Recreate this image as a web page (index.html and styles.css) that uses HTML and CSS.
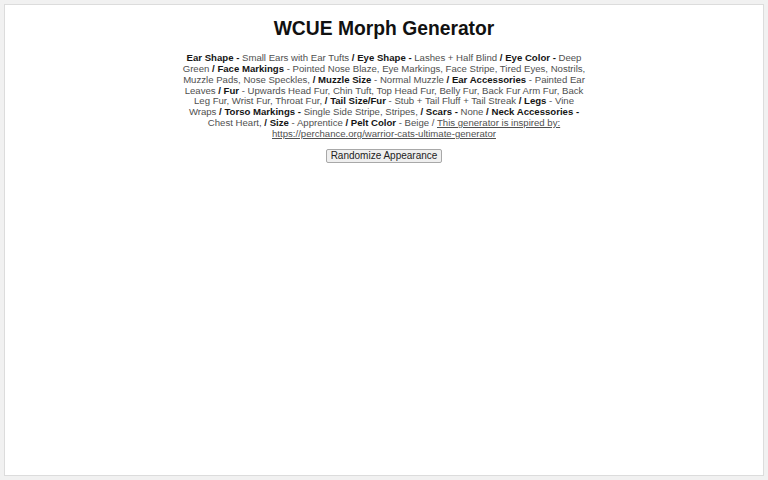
FILE: index.html
```html
<!DOCTYPE html>
<html lang="en">
<head>
<meta charset="utf-8">
<title>WCUE Morph Generator</title>
<link rel="stylesheet" href="styles.css">
</head>
<body>
<main class="page">
  <h1 class="title">WCUE Morph Generator</h1>
  <p class="morph">
    <b>Ear Shape -</b> Small Ears with Ear Tufts <b>/</b> <b>Eye Shape -</b> Lashes + Half Blind <b>/</b> <b>Eye Color -</b> Deep Green <b>/</b> <b>Face Markings</b> - Pointed Nose Blaze, Eye Markings, Face Stripe, Tired Eyes, Nostrils, Muzzle Pads, Nose Speckles, <b>/</b> <b>Muzzle Size</b> - Normal Muzzle <b>/</b> <b>Ear Accessories</b> - Painted Ear Leaves <b>/</b> <b>Fur</b> - Upwards Head Fur, Chin Tuft, Top Head Fur, Belly Fur, Back Fur Arm Fur, Back Leg Fur, Wrist Fur, Throat Fur, <b>/</b> <b>Tail Size/Fur</b> - Stub + Tail Fluff + Tail Streak <b>/</b> <b>Legs</b> - Vine Wraps <b>/</b> <b>Torso Markings -</b> Single Side Stripe, Stripes, <b>/</b> <b>Scars -</b> None <b>/</b> <b>Neck Accessories -</b> Chest Heart, <b>/</b> <b>Size</b> - Apprentice <b>/</b> <b>Pelt Color</b> - Beige / <a class="credit" href="#">This generator is inspired by: https://perchance.org/warrior-cats-ultimate-generator</a>
  </p>
  <div class="actions">
    <button class="randomize" type="button">Randomize Appearance</button>
  </div>
</main>
</body>
</html>
```
FILE: styles.css
```css
html, body {
  margin: 0;
  height: 100%;
}

body {
  background: #f1f1f1;
  padding: 4px;
  box-sizing: border-box;
  font-family: "Liberation Sans", Arial, sans-serif;
}

.page {
  background: #fff;
  border: 1px solid #dcdcdc;
  height: 100%;
  box-sizing: border-box;
  padding-top: 12px;
  text-align: center;
}

.title {
  margin: 0;
  font-size: 19.3px;
  line-height: 24px;
  font-weight: bold;
  color: #111;
}

.morph {
  width: 404px;
  margin: 12px auto 0;
  font-size: 9.6px;
  line-height: 10.85px;
  color: #505050;
}

.morph b {
  color: #151515;
}

.credit {
  color: #505050;
  text-decoration: underline;
}

.actions {
  margin-top: 5px;
}

.randomize {
  font-family: "Liberation Sans", Arial, sans-serif;
  font-size: 10px;
  line-height: 12px;
  padding: 0 4px;
  color: #222;
  background: #efefef;
  border: 1px solid #a8a8a8;
  border-radius: 2px;
}
```
